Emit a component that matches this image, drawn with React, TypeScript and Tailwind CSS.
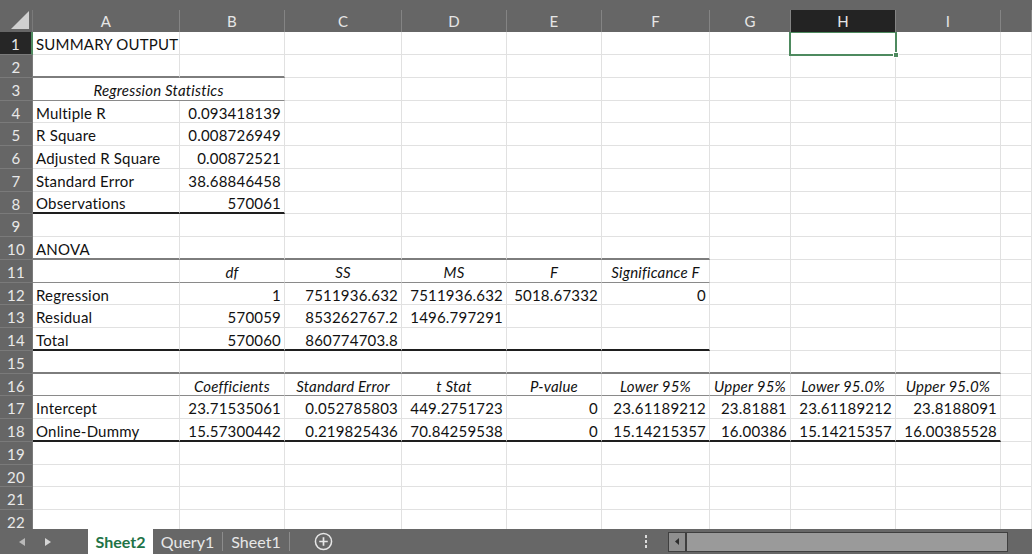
import React from "react";

type Cell = { t: string; a?: "l" | "r" | "c"; i?: boolean; span?: number };

const COLS = ["A", "B", "C", "D", "E", "F", "G", "H", "I", ""];
const WIDTHS = ["w-[147px]", "w-[105px]", "w-[117px]", "w-[105px]", "w-[95px]", "w-[108px]", "w-[81px]", "w-[105px]", "w-[105px]", "w-[31px]"];
const HEIGHTS = ["h-[23px]", "h-[23px]", "h-[23px]", "h-[22px]"];

const L = (t: string): Cell => ({ t, a: "l" });
const R = (t: string): Cell => ({ t, a: "r" });
const H = (t: string): Cell => ({ t, a: "c", i: true });
const E: Cell = { t: "" };

const data: Record<number, Cell[]> = {
  1: [L("SUMMARY OUTPUT")],
  3: [{ t: "Regression Statistics", a: "c", i: true, span: 2 }],
  4: [L("Multiple R"), R("0.093418139")],
  5: [L("R Square"), R("0.008726949")],
  6: [L("Adjusted R Square"), R("0.00872521")],
  7: [L("Standard Error"), R("38.68846458")],
  8: [L("Observations"), R("570061")],
  10: [L("ANOVA")],
  11: [E, H("df"), H("SS"), H("MS"), H("F"), H("Significance F")],
  12: [L("Regression"), R("1"), R("7511936.632"), R("7511936.632"), R("5018.67332"), R("0")],
  13: [L("Residual"), R("570059"), R("853262767.2"), R("1496.797291")],
  14: [L("Total"), R("570060"), R("860774703.8")],
  16: [E, H("Coefficients"), H("Standard Error"), H("t Stat"), H("P-value"), H("Lower 95%"), H("Upper 95%"), H("Lower 95.0%"), H("Upper 95.0%")],
  17: [L("Intercept"), R("23.71535061"), R("0.052785803"), R("449.2751723"), R("0"), R("23.61189212"), R("23.81881"), R("23.61189212"), R("23.8188091")],
  18: [L("Online-Dummy"), R("15.57300442"), R("0.219825436"), R("70.84259538"), R("0"), R("15.14215357"), R("16.00386"), R("15.14215357"), R("16.00385528")],
};

// table rules: [row, lastColIndex, kind]
const rules: [number, number, "top" | "mid" | "end"][] = [
  [2, 1, "top"], [3, 1, "mid"], [8, 1, "end"],
  [10, 5, "top"], [11, 5, "mid"], [14, 5, "end"],
  [15, 8, "top"], [16, 8, "mid"], [18, 8, "end"],
];

function bottomRule(row: number, col: number) {
  const r = rules.find(([rr, last]) => rr === row && col <= last);
  if (!r) return "border-b border-b-[#e1e1e1]";
  if (r[2] === "top") return "border-b-2 border-b-[#7d7d7d]";
  if (r[2] === "mid") return "border-b border-b-[#8a8a8a]";
  return "border-b-2 border-b-[#1e1e1e]";
}

function Row({ n }: { n: number }) {
  const cells = data[n] || [];
  const h = HEIGHTS[(n - 1) % 4];
  const out: React.ReactNode[] = [];
  for (let c = 0; c < COLS.length; c++) {
    const cell = cells[c];
    const span = cell?.span || 1;
    const width = span === 2 ? "w-[252px]" : WIDTHS[c];
    const align = cell?.a === "r" ? "justify-end" : cell?.a === "c" ? "justify-center" : "justify-start";
    const selected = n === 1 && c === 7;
    out.push(
      <div
        key={c}
        className={`shrink-0 flex items-center pt-[3px] px-[3px] leading-none whitespace-nowrap border-r border-r-[#e1e1e1] ${width} ${h} ${align} ${bottomRule(n, c)} ${cell?.i ? "italic" : ""} ${selected ? "relative" : ""}`}
      >
        {cell?.t}
        {selected && (
          <div className="absolute z-10 -left-[2px] -top-[1px] w-[108px] h-[25px] border-2 border-[#4e8a5f]">
            <div className="absolute -right-[4px] -bottom-[4px] w-[6px] h-[6px] bg-[#4e8a5f] border border-white" />
          </div>
        )}
      </div>
    );
    c += span - 1;
  }
  return (
    <div className="flex">
      <div
        className={`shrink-0 w-[33px] ${h} flex items-center justify-center pt-[3px] leading-none text-[#e9e9e9] border-b border-b-[#7a7a7a] ${n === 1 ? "bg-[#262626] border-r-2 border-r-[#4e8a5f]" : "bg-[#666666] border-r border-r-[#7a7a7a]"}`}
      >
        {n}
      </div>
      {out}
    </div>
  );
}

export default function App() {
  const rows = Array.from({ length: 22 }, (_, i) => i + 1);
  return (
    <div className="w-[1032px] h-[554px] overflow-hidden bg-white flex flex-col text-[15px] tracking-[0.2px] text-[#111111] font-['Lato','Liberation_Sans',sans-serif]">
      <div className="h-[10px] shrink-0 bg-[#666666]" />
      {/* column headers */}
      <div className="flex h-[22px] shrink-0 bg-[#666666]">
        <div className="relative w-[33px] shrink-0 border-r border-r-[#7a7a7a]">
          <svg className="absolute right-[3px] bottom-[3px]" width="18" height="18" viewBox="0 0 18 18">
            <polygon points="18,0 18,18 0,18" fill="#d0d0d0" />
          </svg>
        </div>
        {COLS.map((col, i) => (
          <div
            key={i}
            className={`shrink-0 flex items-center justify-center text-[15px] text-[#e6e6e6] border-r border-r-[#848484] ${WIDTHS[i]} ${col === "H" ? "bg-[#232323]" : ""}`}
          >
            {col}
          </div>
        ))}
      </div>
      <div className="flex-1 overflow-hidden">
        {rows.map((n) => (
          <Row key={n} n={n} />
        ))}
      </div>
      {/* sheet tab bar */}
      <div className="h-[25px] shrink-0 bg-[#676767] flex items-stretch text-[16px] tracking-normal">
        <div className="w-[88px] flex items-center gap-[20px] pl-[19px]">
          <svg width="6" height="8" viewBox="0 0 6 8"><polygon points="6,0 6,8 0,4" fill="#b9b9b9" /></svg>
          <svg width="6" height="8" viewBox="0 0 6 8"><polygon points="0,0 0,8 6,4" fill="#d6d6d6" /></svg>
        </div>
        <div className="w-[65px] bg-white flex items-center justify-center font-bold text-[#217346]">Sheet2</div>
        <div className="w-[70px] flex items-center justify-center text-[#e8e8e8] border-r border-r-[#8c8c8c] my-[3px]">Query1</div>
        <div className="w-[67px] flex items-center justify-center text-[#e8e8e8] border-r border-r-[#8c8c8c] my-[3px]">Sheet1</div>
        <div className="w-[66px] flex items-center justify-center">
          <svg width="19" height="19" viewBox="0 0 20 20">
            <circle cx="10" cy="10" r="8.5" fill="none" stroke="#e6e6e6" strokeWidth="1.6" />
            <path d="M10 5.5v9M5.5 10h9" stroke="#e6e6e6" strokeWidth="1.8" />
          </svg>
        </div>
        <div className="flex-1 flex items-center justify-end pr-[9px]">
          <div className="flex flex-col gap-[2px] mr-[12px]">
            <span className="w-[2px] h-[3px] bg-[#dcdcdc]" />
            <span className="w-[2px] h-[3px] bg-[#dcdcdc]" />
            <span className="w-[2px] h-[3px] bg-[#dcdcdc]" />
          </div>
        </div>
        <div className="w-[364px] flex items-center pr-[24px]">
          <div className="h-[20px] flex-1 flex border border-[#3f3f3f] bg-[#9a9a9a]">
            <div className="w-[18px] flex items-center justify-center bg-[#8f8f8f] border-r-2 border-r-[#3f3f3f]">
              <svg width="4" height="7" viewBox="0 0 4 7"><polygon points="4,0 4,7 0,3.5" fill="#2d2d2d" /></svg>
            </div>
            <div className="flex-1" />
          </div>
        </div>
      </div>
    </div>
  );
}
